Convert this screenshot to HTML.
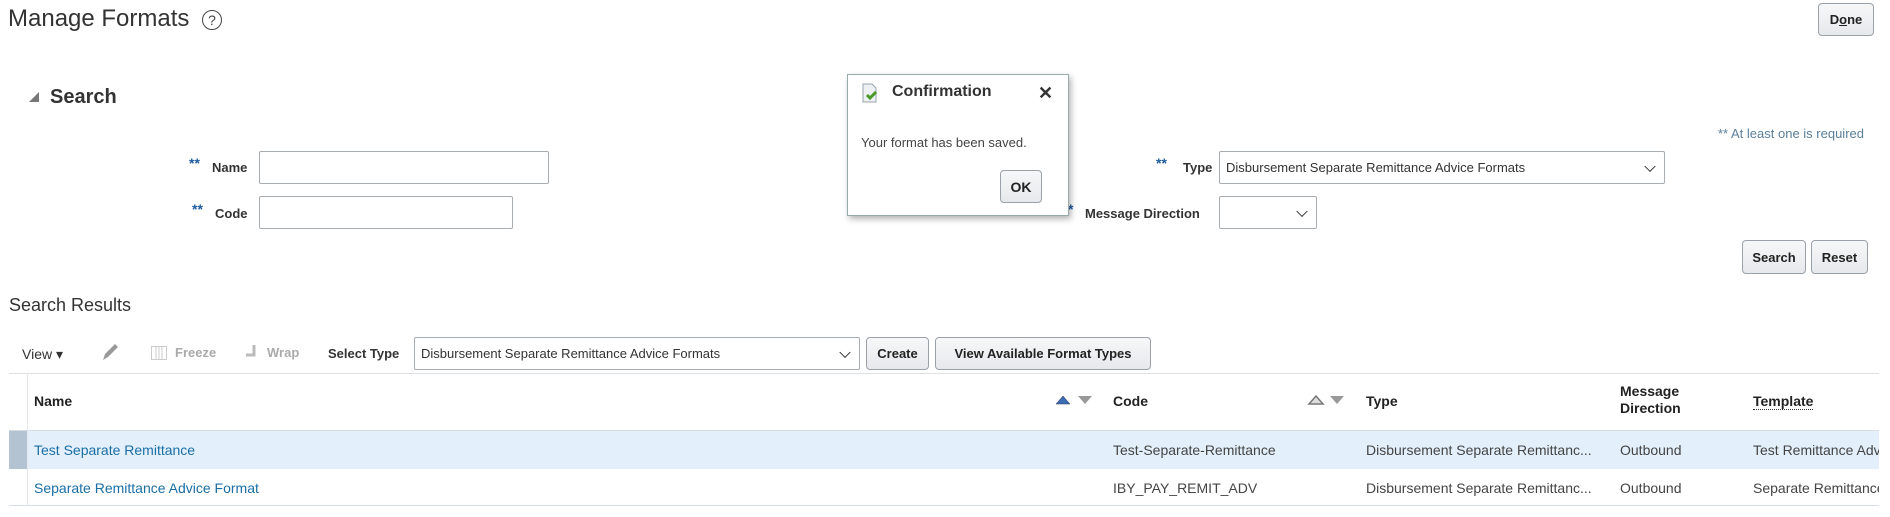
<!DOCTYPE html>
<html><head><meta charset="utf-8"><style>
*{box-sizing:border-box;margin:0;padding:0}
body{width:1890px;height:517px;background:#fff;font-family:"Liberation Sans",Arial,sans-serif;color:#333;position:relative;overflow:hidden}
.a{position:absolute;white-space:nowrap}
.btn{position:absolute;border:1px solid #9aa1a8;border-radius:4px;background:linear-gradient(#f6f7f8,#e6e9ec);font-weight:bold;font-size:13px;color:#222;display:flex;align-items:center;justify-content:center}
.inp{position:absolute;border:1px solid #a8adb2;border-radius:2px;background:#fff}
.lbl{font-size:13px;font-weight:bold;color:#333}
.req{color:#1e5c9e;font-weight:bold;font-size:14px}
.sel{font-size:13px;color:#333;display:flex;align-items:center;padding-left:6px}
.chev{position:absolute;right:10px;top:50%;width:8px;height:8px;border-right:1.6px solid #333;border-bottom:1.6px solid #333;transform:translateY(-70%) rotate(45deg)}
.th{font-size:14px;font-weight:bold;color:#222}
.td{font-size:14px;color:#444}
.lnk{font-size:14px;color:#1a6ea6}
</style></head><body>
<div class="a" style="left:8px;top:5px;font-size:24px;color:#333">Manage Formats</div>
<div class="a" style="left:202px;top:10px;width:20px;height:20px;border:1.5px solid #444;border-radius:50%;font-size:14px;text-align:center;line-height:18px;color:#444">?</div>
<div class="btn" style="left:1818px;top:3px;width:56px;height:33px">D<u>o</u>ne</div>

<svg class="a" style="left:28px;top:91px" width="12" height="12"><polygon points="11,1 11,11 1,11" fill="#777"/></svg>
<div class="a" style="left:50px;top:86px;font-size:20px;font-weight:bold;color:#333">Search</div>

<div class="a" style="left:1718px;top:126px;font-size:13px;color:#5a7f99">** At least one is required</div>

<div class="a req" style="left:189px;top:155px">**</div>
<div class="a lbl" style="left:212px;top:160px">Name</div>
<div class="inp" style="left:259px;top:151px;width:290px;height:33px"></div>
<div class="a req" style="left:192px;top:201px">**</div>
<div class="a lbl" style="left:215px;top:206px">Code</div>
<div class="inp" style="left:259px;top:196px;width:254px;height:33px"></div>

<div class="a req" style="left:1156px;top:155px">**</div>
<div class="a lbl" style="left:1183px;top:160px">Type</div>
<div class="inp sel" style="left:1219px;top:151px;width:446px;height:33px">Disbursement Separate Remittance Advice Formats<span class="chev"></span></div>
<div class="a req" style="left:1068px;top:201px">*</div>
<div class="a lbl" style="left:1085px;top:206px">Message Direction</div>
<div class="inp sel" style="left:1219px;top:196px;width:98px;height:33px"><span class="chev"></span></div>

<div class="btn" style="left:1742px;top:240px;width:64px;height:34px">Search</div>
<div class="btn" style="left:1811px;top:240px;width:57px;height:34px">Reset</div>

<div class="a" style="left:847px;top:74px;width:222px;height:142px;border:1px solid #9aa;background:#fff;box-shadow:2px 3px 6px rgba(0,0,0,.3)"></div>
<svg class="a" style="left:860px;top:83px" width="20" height="20"><path d="M3 1h9l4 4v14H3z" fill="#eef1f4" stroke="#9aa4ae"/><path d="M7 12l3 3 6-6" stroke="#4a9a2a" stroke-width="3" fill="none"/></svg>
<div class="a" style="left:892px;top:83px;font-size:16px;font-weight:bold;color:#333">Confirmation</div>
<div class="a" style="left:1038px;top:83px;font-size:18px;font-weight:bold;color:#333">✕</div>
<div class="a" style="left:861px;top:135px;font-size:13px;color:#444">Your format has been saved.</div>
<div class="btn" style="left:1000px;top:170px;width:42px;height:33px;font-size:14px">OK</div>

<div class="a" style="left:9px;top:295px;font-size:18px;color:#333">Search Results</div>

<div class="a" style="left:22px;top:346px;font-size:14px;color:#333">View ▾</div>
<svg class="a" style="left:100px;top:342px" width="20" height="20"><path d="M3 18l2-6L15 2l3 3L8 15z" fill="#999"/></svg>
<svg class="a" style="left:151px;top:346px" width="16" height="14"><rect x=".5" y=".5" width="15" height="13" fill="none" stroke="#ccc"/><path d="M5 1v13M8 1v13M11 1v13" stroke="#ccc"/></svg>
<div class="a" style="left:175px;top:345px;font-size:13px;font-weight:bold;color:#aaa">Freeze</div>
<svg class="a" style="left:243px;top:344px" width="16" height="16"><path d="M11 1v10H3" stroke="#bbb" stroke-width="3" fill="none"/></svg>
<div class="a" style="left:267px;top:345px;font-size:13px;font-weight:bold;color:#aaa">Wrap</div>
<div class="a lbl" style="left:328px;top:346px">Select Type</div>
<div class="inp sel" style="left:414px;top:337px;width:446px;height:33px">Disbursement Separate Remittance Advice Formats<span class="chev"></span></div>
<div class="btn" style="left:866px;top:337px;width:63px;height:33px">Create</div>
<div class="btn" style="left:935px;top:337px;width:216px;height:33px">View Available Format Types</div>

<div class="a" style="left:9px;top:373px;width:1870px;height:1px;background:#dde1e4"></div>
<div class="a" style="left:27px;top:373px;width:1px;height:132px;background:#e5e8ea"></div>
<div class="a th" style="left:34px;top:393px">Name</div>
<svg class="a" style="left:1055px;top:394px" width="40" height="12"><polygon points="1,10 8,2 15,10" fill="#3b6cb4" stroke="#335" stroke-width=".5"/><polygon points="23,2 37,2 30,10" fill="#999"/></svg>
<div class="a th" style="left:1113px;top:393px">Code</div>
<svg class="a" style="left:1307px;top:394px" width="40" height="12"><polygon points="2,10 9,2 16,10" fill="#ddd" stroke="#777" stroke-width="1.5"/><polygon points="23,2 37,2 30,10" fill="#999"/></svg>
<div class="a th" style="left:1366px;top:393px">Type</div>
<div class="a th" style="left:1620px;top:383px;line-height:17px">Message<br>Direction</div>
<div class="a th" style="left:1753px;top:393px;border-bottom:1px dotted #333">Template</div>

<div class="a" style="left:9px;top:430px;width:1870px;height:1px;background:#d7dde2"></div>
<div class="a" style="left:28px;top:431px;width:1851px;height:38px;background:#e3f0fb"></div>
<div class="a" style="left:9px;top:431px;width:18px;height:38px;background:#b3c3d2"></div>
<div class="a lnk" style="left:34px;top:442px">Test Separate Remittance</div>
<div class="a td" style="left:1113px;top:442px">Test-Separate-Remittance</div>
<div class="a td" style="left:1366px;top:442px">Disbursement Separate Remittanc...</div>
<div class="a td" style="left:1620px;top:442px">Outbound</div>
<div class="a td" style="left:1753px;top:442px;width:126px;overflow:hidden">Test Remittance Advice</div>

<div class="a lnk" style="left:34px;top:480px">Separate Remittance Advice Format</div>
<div class="a td" style="left:1113px;top:480px">IBY_PAY_REMIT_ADV</div>
<div class="a td" style="left:1366px;top:480px">Disbursement Separate Remittanc...</div>
<div class="a td" style="left:1620px;top:480px">Outbound</div>
<div class="a td" style="left:1753px;top:480px;width:126px;overflow:hidden">Separate Remittance</div>
<div class="a" style="left:9px;top:505px;width:1870px;height:1px;background:#d7dde2"></div>
</body></html>
